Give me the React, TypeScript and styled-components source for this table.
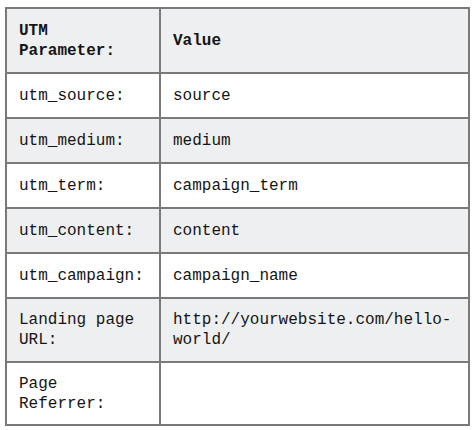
import React from "react";
import styled, { createGlobalStyle } from "styled-components";

const Global = createGlobalStyle`
  html, body { margin: 0; padding: 0; background: #ffffff; }
  body { font-family: "Liberation Mono", "Courier New", monospace; }
`;

const Page = styled.div`
  padding: 7px 0 0 5px;
`;

const Table = styled.table`
  width: 465px;
  table-layout: fixed;
  border-collapse: separate;
  border-spacing: 0;
  border-top: 2px solid #7a7a7a;
  border-left: 2px solid #7a7a7a;
  font-family: "Liberation Mono", "Courier New", monospace;
  font-size: 16px;
  line-height: 20px;
  color: #151515;
`;

const Row = styled.tr<{ $shaded: boolean }>`
  background: ${(p) => (p.$shaded ? "#eeeff0" : "#ffffff")};
`;

const Cell = styled.td<{ $head?: boolean; $h: number }>`
  height: ${(p) => p.$h}px;
  box-sizing: border-box;
  padding: 0 12px 0 12px;
  border-right: 2px solid #7a7a7a;
  border-bottom: 2px solid #7a7a7a;
  vertical-align: middle;
  font-weight: ${(p) => (p.$head ? 700 : 400)};
  word-break: normal;
  overflow-wrap: normal;
`;

const FirstCol = styled.col`
  width: 154px;
`;

type RowData = { k: string[]; v: string[]; h: number };

const rows: RowData[] = [
  { k: ["utm_source:"], v: ["source"], h: 45 },
  { k: ["utm_medium:"], v: ["medium"], h: 45 },
  { k: ["utm_term:"], v: ["campaign_term"], h: 45 },
  { k: ["utm_content:"], v: ["content"], h: 45 },
  { k: ["utm_campaign:"], v: ["campaign_name"], h: 45 },
  { k: ["Landing page", "URL:"], v: ["http://yourwebsite.com/hello-", "world/"], h: 64 },
  { k: ["Page", "Referrer:"], v: [], h: 63 },
];

function Lines({ parts }: { parts: string[] }) {
  return (
    <>
      {parts.map((p, i) => (
        <React.Fragment key={i}>
          {i > 0 && <br />}
          {p}
        </React.Fragment>
      ))}
    </>
  );
}

export default function App() {
  return (
    <Page>
      <Global />
      <Table>
        <colgroup>
          <FirstCol />
          <col />
        </colgroup>
        <tbody>
          <Row $shaded>
            <Cell $head $h={65}>
              <Lines parts={["UTM", "Parameter:"]} />
            </Cell>
            <Cell $head $h={65}>Value</Cell>
          </Row>
          {rows.map((r, i) => (
            <Row key={r.k.join(" ")} $shaded={i % 2 === 1}>
              <Cell $h={r.h}>
                <Lines parts={r.k} />
              </Cell>
              <Cell $h={r.h}>
                <Lines parts={r.v} />
              </Cell>
            </Row>
          ))}
        </tbody>
      </Table>
    </Page>
  );
}
